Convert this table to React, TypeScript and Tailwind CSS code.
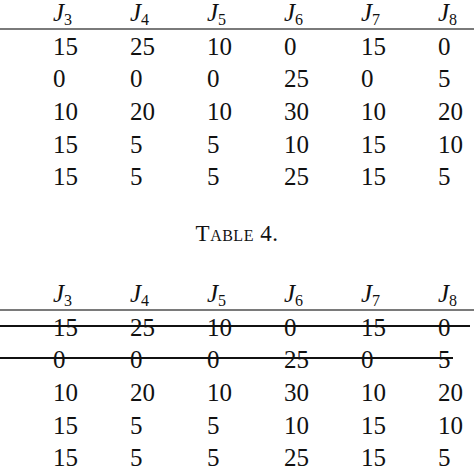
import React from "react";

const top = [
  ["15", "25", "10", "0", "15", "0"],
  ["0", "0", "0", "25", "0", "5"],
  ["10", "20", "10", "30", "10", "20"],
  ["15", "5", "5", "10", "15", "10"],
  ["15", "5", "5", "25", "15", "5"],
];

const heads = ["3", "4", "5", "6", "7", "8"];

function Header() {
  return (
    <div className="grid grid-cols-[repeat(6,77px)] pl-[53px] h-[28px] items-end pb-[5px]">
      {heads.map((h) => (
        <div key={h} className="text-[25px] leading-none">
          <span className="italic">J</span>
          <sub className="text-[16px] not-italic align-baseline relative top-[4px]">{h}</sub>
        </div>
      ))}
    </div>
  );
}

function Row({ cells, strike }: { cells: string[]; strike?: number }) {
  return (
    <div className="relative grid grid-cols-[repeat(6,77px)] pl-[53px] h-[33.6px] items-center">
      {cells.map((c, i) => (
        <div key={i} className="text-[25px] leading-none">
          {c}
        </div>
      ))}
      {strike ? (
        <div
          className="absolute left-0 top-[14px] h-[2px] bg-[#111]"
          style={{ width: strike }}
        />
      ) : null}
    </div>
  );
}

export default function App() {
  return (
    <div
      className="w-[474px] h-[474px] overflow-hidden bg-white text-[#111] flex flex-col"
      style={{ fontFamily: '"Liberation Serif", serif' }}
    >
      <Header />
      <div className="h-[2px] bg-[#7a7a7a]" />
      {top.map((r, i) => (
        <Row key={i} cells={r} />
      ))}
      <div className="h-[83px] flex items-center justify-center pt-[2px]">
        <span className="text-[23px] [font-variant:small-caps] tracking-[0.5px]">Table 4.</span>
      </div>
      <div className="mt-[7px]" />
      <Header />
      <div className="h-[2px] bg-[#7a7a7a]" />
      {top.map((r, i) => (
        <Row key={i} cells={r} strike={i === 0 ? 470 : i === 1 ? 453 : undefined} />
      ))}
    </div>
  );
}
